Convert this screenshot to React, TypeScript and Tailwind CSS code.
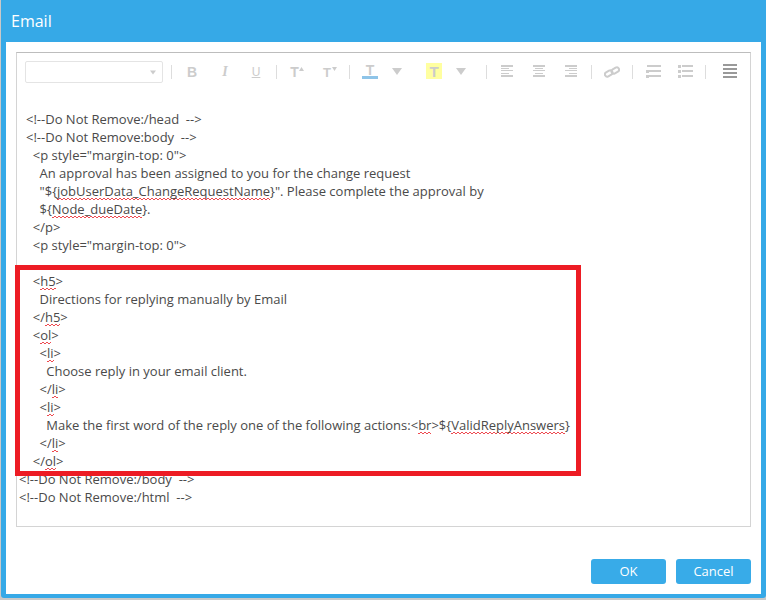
import React from "react";

const Sq = ({ children }: { children: React.ReactNode }) => (
  <span className="bg-[linear-gradient(135deg,transparent_35%,#ee4a50_35%,#ee4a50_65%,transparent_65%),linear-gradient(45deg,transparent_35%,#ee4a50_35%,#ee4a50_65%,transparent_65%)] bg-[length:4px_2px] bg-[position:0_100%,2px_100%] bg-repeat-x">{children}</span>
);

const Sep = ({ ml }: { ml: string }) => <div className={`h-[14px] w-px bg-[#ddd] shrink-0 ${ml}`} />;

const Arrow = ({ c = "#ccc", w = 10, h = 7 }: { c?: string; w?: number; h?: number }) => (
  <svg width={w} height={h} viewBox="0 0 10 7" className="shrink-0 block"><path d="M0 0h10L5 7z" fill={c} /></svg>
);

const Lines = ({ rows }: { rows: number[][] }) => (
  <svg width={12} height={12} viewBox="0 0 12 12" className="shrink-0 block">
    {rows.map(([x, y, len], i) => (
      <rect key={i} x={x} y={y} width={len} height={y === 0 || y === 10 ? 2 : 1} fill="#ccc" />
    ))}
  </svg>
);

const L = ({ i, children }: { i: string; children: React.ReactNode }) => (
  <div className={`h-[18px] whitespace-pre ${i}`}>{children}</div>
);

export default function App() {
  return (
    <div className="w-[766px] h-[600px] bg-[#c9c9c9] overflow-hidden font-['Open_Sans',sans-serif]">
      <div className="w-[765px] h-[598px] ml-px bg-[#36a9e7] rounded-b-[3px] pl-[5px] pr-[5px] pb-[4px] flex flex-col">
        <div className="h-[42px] shrink-0 flex items-center pl-[5px] pb-px text-white text-[16px]">Email</div>
        <div className="flex-1 bg-white relative pl-[10px] pr-[10px] pt-[10px] flex flex-col">
          <div className="h-[475px] border border-[#d4d4d4] border-t-[#bdbdbd] shrink-0">
            <div className="h-[36px] flex items-center pl-[8px] pt-[2px]">
              <div className="w-[138px] h-[22px] border border-[#e4e4e4] rounded-[2px] flex items-center justify-end pr-[6px] shrink-0">
                <Arrow w={6} h={5} />
              </div>
              <Sep ml="ml-[8px]" />
              <span className="ml-[15px] w-[10px] text-center text-[14px] font-bold text-[#ccc] leading-none font-['Liberation_Sans',sans-serif]">B</span>
              <span className="ml-[23px] w-[10px] text-center text-[14px] italic font-['Liberation_Serif',serif] font-bold text-[#ccc] leading-none">I</span>
              <span className="ml-[21px] w-[10px] text-center text-[12px] text-[#ccc] leading-none underline font-['Liberation_Sans',sans-serif]">U</span>
              <Sep ml="ml-[15px]" />
              <span className="ml-[13px] w-[9px] text-center text-[14px] font-bold text-[#ccc] leading-none font-['Liberation_Sans',sans-serif]">T</span>
              <svg width="5" height="4" viewBox="0 0 5 4" className="-mt-[7px] shrink-0 block"><path d="M0 4L2.5 0 5 4z" fill="#ccc" /></svg>
              <span className="ml-[19px] w-[8px] text-center text-[13px] font-bold text-[#ccc] leading-none font-['Liberation_Sans',sans-serif]">T</span>
              <svg width="5" height="4" viewBox="0 0 5 4" className="ml-px -mt-[7px] shrink-0 block"><path d="M0 0h5L2.5 4z" fill="#ccc" /></svg>
              <Sep ml="ml-[12px]" />
              <div className="ml-[12px] w-[16px] h-[16px] flex flex-col items-center justify-between shrink-0">
                <span className="text-[14px] font-bold text-[#ccc] leading-[12px] font-['Liberation_Sans',sans-serif]">T</span>
                <div className="w-[16px] h-[3px] mb-px bg-[#8ec4e8]" />
              </div>
              <div className="ml-[14px] -mt-[2px]"><Arrow /></div>
              <div className="ml-[24px] -mt-[2px] w-[16px] h-[16px] bg-[#ffffa0] flex items-center justify-center shrink-0">
                <span className="text-[15px] font-bold text-[#ccc] leading-none pt-px font-['Liberation_Sans',sans-serif]">T</span>
              </div>
              <div className="ml-[14px] -mt-[2px]"><Arrow /></div>
              <Sep ml="ml-[20px]" />
              <div className="ml-[14px] -mt-[2px]"><Lines rows={[[0,0,12],[0,3,8],[0,5,12],[0,8,8],[0,10,12]]} /></div>
              <div className="ml-[20px] -mt-[2px]"><Lines rows={[[0,0,12],[2,3,8],[0,5,12],[2,8,8],[0,10,12]]} /></div>
              <div className="ml-[20px] -mt-[2px]"><Lines rows={[[0,0,12],[4,3,8],[0,5,12],[4,8,8],[0,10,12]]} /></div>
              <Sep ml="ml-[14px]" />
              <svg width="16" height="14" viewBox="0 0 16 14" className="ml-[12px] shrink-0 block" fill="none" stroke="#ccc" strokeWidth="2">
                <rect x="0.7" y="6.2" width="8" height="4.6" rx="2.3" transform="rotate(-30 4.7 8.5)" />
                <rect x="7.3" y="3.2" width="8" height="4.6" rx="2.3" transform="rotate(-30 11.3 5.5)" />
              </svg>
              <Sep ml="ml-[12px]" />
              <svg width="16" height="14" viewBox="0 0 16 14" className="ml-[12px] shrink-0 block">
                <rect x="2" y="0" width="2" height="2" fill="#ccc" /><rect x="1" y="5" width="3" height="3" fill="#ccc" /><rect x="1" y="10" width="3" height="3" fill="#ccc" />
                <rect x="4" y="0" width="12" height="2" fill="#ccc" /><rect x="4" y="5" width="12" height="2" fill="#ccc" /><rect x="4" y="10" width="12" height="2" fill="#ccc" />
              </svg>
              <svg width="15" height="14" viewBox="0 0 15 14" className="ml-[17px] shrink-0 block">
                <rect x="0" y="0" width="3" height="3" fill="#ccc" /><rect x="0" y="5" width="3" height="3" fill="#ccc" /><rect x="0" y="10" width="3" height="3" fill="#ccc" />
                <rect x="4" y="0" width="11" height="2" fill="#ccc" /><rect x="4" y="5" width="11" height="2" fill="#ccc" /><rect x="4" y="10" width="11" height="2" fill="#ccc" />
              </svg>
              <Sep ml="ml-[12px]" />
              <svg width="14" height="14" viewBox="0 0 14 14" className="ml-[17px] -mt-[2px] shrink-0 block">
                {[0, 4, 8, 12].map((y) => <rect key={y} x="0" y={y} width="14" height="2" fill="#999" />)}
              </svg>
            </div>
            <div className="pt-[21px] text-[13px] leading-[18px] text-[#4a4a4a]">
              <L i="pl-[9px]">{"<!--Do Not Remove:/head  -->"}</L>
              <L i="pl-[9px]">{"<!--Do Not Remove:body  -->"}</L>
              <L i="pl-[15.75px]">{'<p style="margin-top: 0">'}</L>
              <L i="pl-[22.5px]">An approval has been assigned to you for the change request</L>
              <L i="pl-[22.5px]">"${"{"}<Sq>jobUserData_ChangeRequestName</Sq>{'}". Please complete the approval by'}</L>
              <L i="pl-[22.5px]">${"{"}<Sq>Node_dueDate</Sq>{"}."}</L>
              <L i="pl-[15.75px]">{"</p>"}</L>
              <L i="pl-[15.75px]">{'<p style="margin-top: 0">'}</L>
              <div className="h-[18px]" />
              <L i="pl-[15.75px]">{"<"}<Sq>h5</Sq>{">"}</L>
              <L i="pl-[22.5px]">Directions for replying manually by Email</L>
              <L i="pl-[15.75px]">{"</"}<Sq>h5</Sq>{">"}</L>
              <L i="pl-[15.75px]">{"<"}<Sq>ol</Sq>{">"}</L>
              <L i="pl-[22.5px]">{"<"}<Sq>li</Sq>{">"}</L>
              <L i="pl-[29.25px]">Choose reply in your email client.</L>
              <L i="pl-[22.5px]">{"</"}<Sq>li</Sq>{">"}</L>
              <L i="pl-[22.5px]">{"<"}<Sq>li</Sq>{">"}</L>
              <L i="pl-[29.25px]">{"Make the first word of the reply one of the following actions:<"}<Sq>br</Sq>{">${"}<Sq>ValidReplyAnswers</Sq>{"}"}</L>
              <L i="pl-[22.5px]">{"</"}<Sq>li</Sq>{">"}</L>
              <L i="pl-[15.75px]">{"</"}<Sq>ol</Sq>{">"}</L>
              <L i="pl-[2px]">{"<!--Do Not Remove:/body  -->"}</L>
              <L i="pl-[2px]">{"<!--Do Not Remove:/html  -->"}</L>
            </div>
          </div>
          <div className="flex justify-end gap-[10px] pt-[32px]">
            <button className="w-[75px] h-[25px] rounded-[3px] bg-[#38abe8] text-white text-[13px]">OK</button>
            <button className="w-[75px] h-[25px] rounded-[3px] bg-[#38abe8] text-white text-[13px]">Cancel</button>
          </div>
          <div className="absolute left-[9px] top-[223px] w-[566px] h-[211px] border-[5px] border-[#ed1c24]" />
        </div>
      </div>
    </div>
  );
}
